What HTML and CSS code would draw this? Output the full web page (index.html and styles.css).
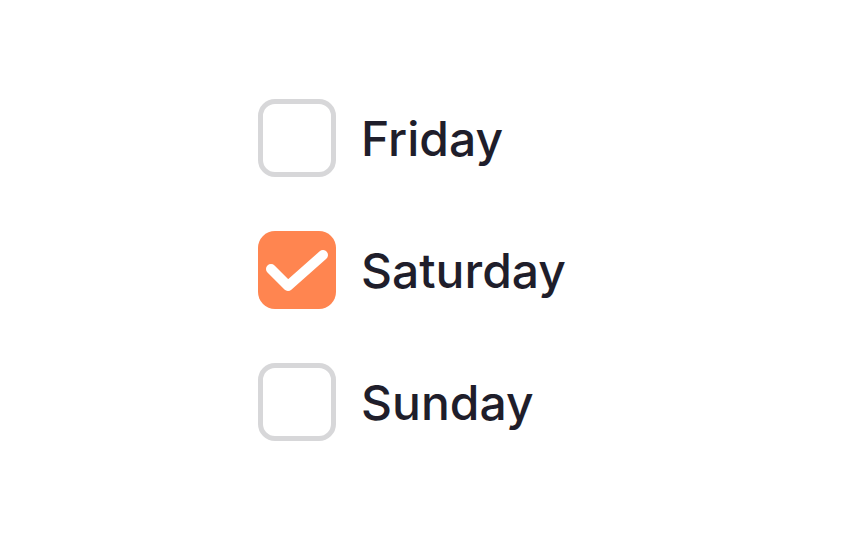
FILE: index.html
```html
<!DOCTYPE html>
<html lang="en">
<head>
  <meta charset="UTF-8" />
  <meta name="viewport" content="width=device-width, initial-scale=1.0"/>
  <title>Checkbox list</title>
  <link rel="stylesheet" href="styles.css">
</head>
<body>
  <div class="list">
    <label class="item">
      <span class="box"></span>
      <span class="label">Friday</span>
    </label>
    <label class="item">
      <span class="box checked">
        <svg viewBox="0 0 78 78" width="78" height="78">
          <path d="M13 38 L30 55 L65 24" fill="none" stroke="#fff" stroke-width="10" stroke-linecap="round" stroke-linejoin="round"/>
        </svg>
      </span>
      <span class="label">Saturday</span>
    </label>
    <label class="item">
      <span class="box"></span>
      <span class="label">Sunday</span>
    </label>
  </div>
</body>
</html>
```

FILE: styles.css
```css
body {
  margin: 0;
  background: #fff;
  font-family: Inter, "Noto Sans", sans-serif;
}
.list {
  height: 540px;
  padding-left: 258px;
  display: flex;
  flex-direction: column;
  justify-content: center;
  gap: 54px;
}
.item {
  display: flex;
  align-items: center;
  gap: 25px;
}
.box {
  width: 78px;
  height: 78px;
  box-sizing: border-box;
  border: 5px solid #d7d7d9;
  border-radius: 17px;
  position: relative;
}
.box.checked {
  border: none;
  background: #ff8550;
}
.box svg {
  display: block;
}
.label {
  font-size: 48px;
  font-weight: 500;
  line-height: 1;
  color: #1f1e2b;
  padding-top: 2px;
}
```
